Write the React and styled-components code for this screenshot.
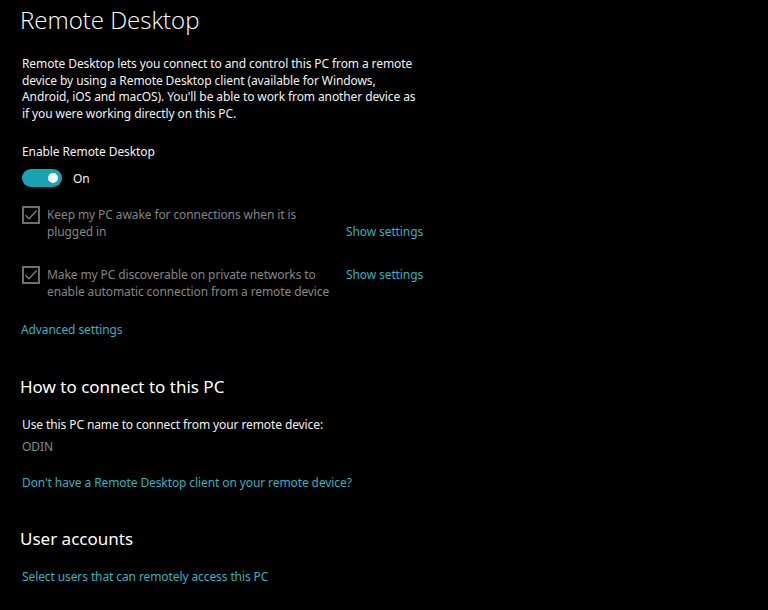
import React from 'react';
import styled, { createGlobalStyle } from 'styled-components';

const GlobalStyle = createGlobalStyle`
  html, body {
    margin: 0;
    padding: 0;
    background: #000;
  }
  body {
    font-family: 'Noto Sans', 'Open Sans', sans-serif;
    color: #fff;
    -webkit-font-smoothing: antialiased;
  }
`;

const Page = styled.div`
  width: 768px;
  height: 610px;
  box-sizing: border-box;
  padding: 3px 0 0 20px;
  background: #000;
  overflow: hidden;
`;

const Title = styled.h1`
  margin: 0;
  font-family: 'Open Sans', 'Noto Sans', sans-serif;
  font-size: 24px;
  line-height: 34px;
  font-weight: 300;
  color: #fff;
`;

const SectionTitle = styled.h2`
  margin: ${p => p.$top}px 0 0;
  font-size: 17px;
  line-height: 24px;
  font-weight: 400;
  color: #fff;
`;

const Text = styled.p`
  margin: ${p => p.$top || 0}px 0 0 ${p => p.$indent || 0}px;
  font-size: 12px;
  line-height: ${p => p.$lh || 16}px;
  letter-spacing: -0.1px;
  color: ${p => (p.$muted ? '#8a8a8a' : '#f2f2f2')};
`;

const Link = styled.a`
  display: block;
  margin: ${p => p.$top || 0}px 0 0 ${p => p.$indent || 0}px;
  font-size: 12px;
  line-height: 16px;
  letter-spacing: -0.1px;
  color: #2fb2c2;
  text-decoration: none;
  cursor: pointer;
`;

const ToggleRow = styled.div`
  display: flex;
  align-items: center;
  gap: 11px;
  margin: 9px 0 0 2px;
  height: 18px;
`;

const Switch = styled.div`
  width: 40px;
  height: 18px;
  border-radius: 9px;
  background: #18a3b5;
  display: flex;
  align-items: center;
  justify-content: flex-end;
  padding-right: 4px;
  box-sizing: border-box;
`;

const Knob = styled.span`
  width: 10px;
  height: 10px;
  border-radius: 50%;
  background: #fff;
`;

const SwitchLabel = styled.span`
  font-size: 12px;
  color: #f2f2f2;
`;

const CheckRow = styled.div`
  display: flex;
  margin: ${p => p.$top}px 0 0 2px;
`;

const Box = styled.div`
  width: 18px;
  height: 18px;
  flex: none;
  box-sizing: border-box;
  border: 2px solid #6f6f6f;
  display: flex;
  align-items: center;
  justify-content: center;
  margin-right: 7px;
`;

const CheckLabel = styled.div`
  width: 299px;
  padding-top: 1px;
  font-size: 12px;
  line-height: 16.5px;
  letter-spacing: -0.1px;
  color: #858585;
`;

const SideLink = styled.a`
  align-self: ${p => (p.$bottom ? 'flex-end' : 'flex-start')};
  padding-top: 1px;
  font-size: 12px;
  line-height: 16.5px;
  letter-spacing: -0.1px;
  color: #2fb2c2;
  cursor: pointer;
`;

function Checkbox() {
  return (
    <Box>
      <svg width="14" height="14" viewBox="0 0 14 14">
        <path d="M1.5 7.2 L5 10.8 L12.6 2.6" fill="none" stroke="#7a7a7a" strokeWidth="1.4" />
      </svg>
    </Box>
  );
}

export default function App() {
  return (
    <Page>
      <GlobalStyle />
      <Title>Remote Desktop</Title>
      <Text $top={19} $lh={16.5} $indent={2}>
        Remote Desktop lets you connect to and control this PC from a remote<br />
        device by using a Remote Desktop client (available for Windows,<br />
        Android, iOS and macOS). You'll be able to work from another device as<br />
        if you were working directly on this PC.
      </Text>

      <Text $top={22} $indent={2}>Enable Remote Desktop</Text>
      <ToggleRow>
        <Switch><Knob /></Switch>
        <SwitchLabel>On</SwitchLabel>
      </ToggleRow>

      <CheckRow $top={19}>
        <Checkbox />
        <CheckLabel>
          Keep my PC awake for connections when it is<br />plugged in
        </CheckLabel>
        <SideLink $bottom>Show settings</SideLink>
      </CheckRow>
      <CheckRow $top={26}>
        <Checkbox />
        <CheckLabel>
          Make my PC discoverable on private networks to<br />
          enable automatic connection from a remote device
        </CheckLabel>
        <SideLink>Show settings</SideLink>
      </CheckRow>

      <Link $top={22} $indent={1}>Advanced settings</Link>

      <SectionTitle $top={37}>How to connect to this PC</SectionTitle>
      <Text $top={18} $indent={2}>Use this PC name to connect from your remote device:</Text>
      <Text $top={6} $indent={2} $muted>ODIN</Text>
      <Link $top={20} $indent={2}>Don't have a Remote Desktop client on your remote device?</Link>

      <SectionTitle $top={36}>User accounts</SectionTitle>
      <Link $top={18} $indent={2}>Select users that can remotely access this PC</Link>
    </Page>
  );
}
